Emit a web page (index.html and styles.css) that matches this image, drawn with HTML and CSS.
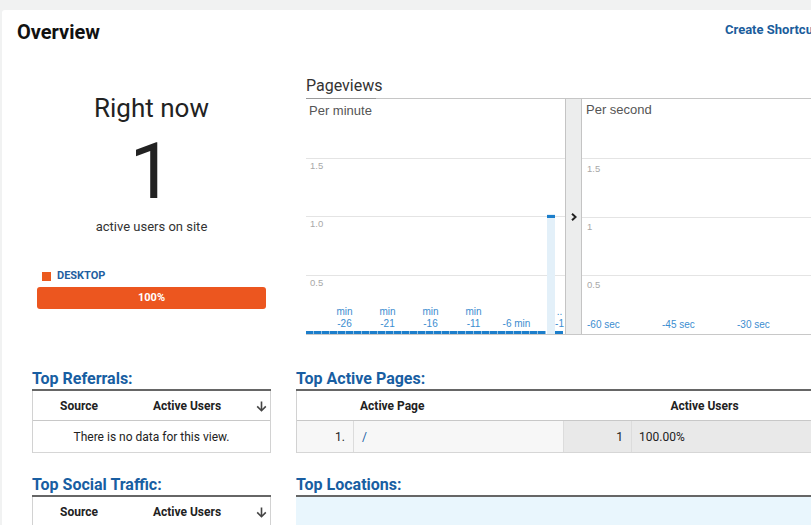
FILE: index.html
```html
<!DOCTYPE html>
<html lang="en">
<head>
<meta charset="utf-8">
<title>Overview</title>
<link rel="stylesheet" href="styles.css">
</head>
<body>
<div class="panel">
  <header class="topbar">
    <h1 class="title">Overview</h1>
    <a class="shortcut">Create Shortcut</a>
  </header>

  <div class="board">
    <section class="now">
      <div class="now-label">Right now</div>
      <div class="now-count">1</div>
      <div class="now-sub">active users on site</div>
      <div class="legend"><span class="swatch"></span><span class="legend-text">DESKTOP</span></div>
      <div class="device-bar">100%</div>
    </section>

    <section class="pageviews">
      <h2 class="pv-title">Pageviews</h2>
      <div class="chart">
        <div class="pane pane-min">
          <div class="pane-title">Per minute</div>
          <div class="gl gl-a"></div>
          <div class="gl gl-b"></div>
          <div class="gl gl-c"></div>
          <div class="yl ym-a">1.5</div>
          <div class="yl ym-b">1.0</div>
          <div class="yl ym-c">0.5</div>
          <div class="hl-col"></div>
          <div class="hl-cap"></div>
          <div class="axis"></div>
          <div class="last-bar"></div>
          <div class="xaxis-min">
            <div class="xl"><span>min</span><span>-26</span></div>
            <div class="xl"><span>min</span><span>-21</span></div>
            <div class="xl"><span>min</span><span>-16</span></div>
            <div class="xl"><span>min</span><span>-11</span></div>
            <div class="xl"><span>&nbsp;</span><span>-6 min</span></div>
            <div class="xl"><span>..</span><span>-1</span></div>
          </div>
        </div>
        <div class="divider">
          <svg class="chev" width="6" height="8" viewBox="0 0 6 8"><polyline points="1,0.8 4.6,4 1,7.2" fill="none" stroke="#222" stroke-width="2"/></svg>
        </div>
        <div class="pane pane-sec">
          <div class="pane-title">Per second</div>
          <div class="gl gs-a"></div>
          <div class="gl gs-b"></div>
          <div class="gl gs-c"></div>
          <div class="yl ys ys-a">1.5</div>
          <div class="yl ys ys-b">1</div>
          <div class="yl ys ys-c">0.5</div>
          <div class="xaxis-sec">
            <span class="xs">-60 sec</span>
            <span class="xs">-45 sec</span>
            <span class="xs">-30 sec</span>
          </div>
        </div>
      </div>
    </section>

    <section class="block row2">
      <h3 class="sec-title">Top Referrals:</h3>
      <div class="tbl">
        <div class="tr ref-cols thead">
          <div class="th">Source</div>
          <div class="th">Active Users</div>
          <div class="th th-sort"><svg width="11" height="11" viewBox="0 0 11 11"><path d="M5.5 0.5V9.6M1.2 5.4L5.5 9.7L9.8 5.4" fill="none" stroke="#444" stroke-width="1.6"/></svg></div>
        </div>
        <div class="empty-row">There is no data for this view.</div>
      </div>
    </section>

    <section class="block row2">
      <h3 class="sec-title">Top Active Pages:</h3>
      <div class="tbl">
        <div class="tr pg-cols thead">
          <div class="th"></div>
          <div class="th th-left">Active Page</div>
          <div class="th th-span">Active Users</div>
        </div>
        <div class="tr pg-cols drow">
          <div class="td c1">1.</div>
          <div class="td c2"><a class="page-link">/</a></div>
          <div class="td c3">1</div>
          <div class="td c4">100.00%</div>
        </div>
      </div>
    </section>

    <section class="block row3">
      <h3 class="sec-title">Top Social Traffic:</h3>
      <div class="tbl">
        <div class="tr ref-cols thead">
          <div class="th">Source</div>
          <div class="th">Active Users</div>
          <div class="th th-sort"><svg width="11" height="11" viewBox="0 0 11 11"><path d="M5.5 0.5V9.6M1.2 5.4L5.5 9.7L9.8 5.4" fill="none" stroke="#444" stroke-width="1.6"/></svg></div>
        </div>
        <div class="empty-row">There is no data for this view.</div>
      </div>
    </section>

    <section class="block row3">
      <h3 class="sec-title">Top Locations:</h3>
      <div class="map"></div>
    </section>
  </div>
</div>
</body>
</html>
```

FILE: styles.css
```css
* { box-sizing: border-box; }
html, body { margin: 0; padding: 0; }
body {
  background: #f1f2f2;
  font-family: Roboto, "Noto Sans", Arial, sans-serif;
  color: #222;
  width: 811px;
  height: 525px;
  overflow: hidden;
  padding: 10px 0 0 2px;
}
.panel {
  background: #fff;
  width: 880px;
  height: 515px;
  border-radius: 3px 3px 0 0;
  overflow: hidden;
}
.topbar {
  display: grid;
  grid-template-columns: 708px auto;
  align-items: start;
  padding: 10px 0 12px 15px;
}
.title {
  margin: 0;
  font-size: 20px;
  line-height: 24px;
  font-weight: 700;
  color: #111;
}
.shortcut {
  margin-top: 2px;
  font-size: 13px;
  line-height: 16px;
  font-weight: 700;
  color: #1b5d9c;
  white-space: nowrap;
}
.board {
  display: grid;
  grid-template-columns: 239px 550px;
  column-gap: 25px;
  padding-left: 30px;
  align-items: start;
}

/* Right now */
.now { text-align: center; }
.now-label {
  margin-top: 37px;
  font-size: 26px;
  line-height: 30px;
  color: #222;
}
.now-count {
  margin-top: 8px;
  font-size: 78px;
  line-height: 81px;
  color: #222;
}
.now-sub {
  margin-top: 7px;
  font-size: 13px;
  line-height: 16px;
  color: #333;
}
.legend {
  margin-top: 34px;
  height: 14px;
  display: flex;
  align-items: center;
  gap: 6px;
  padding-left: 10px;
}
.swatch { width: 9px; height: 9px; background: #eb5a1e; }
.legend-text {
  font-size: 11px;
  line-height: 14px;
  font-weight: 700;
  color: #1f5fa0;
}
.device-bar {
  margin: 4px 5px 0;
  height: 22px;
  line-height: 22px;
  background: #ec561f;
  border-radius: 3px;
  color: #fff;
  font-size: 11px;
  font-weight: 700;
}

/* Pageviews chart */
.pageviews { margin-left: 10px; padding-top: 19px; }
.pv-title {
  margin: 0;
  padding: 1px 0 2px;
  font-size: 16px;
  line-height: 20px;
  font-weight: 400;
  color: #333;
}
.chart {
  display: flex;
  height: 237px;
  border-bottom: 1px solid #c8c8c8;
}
.pane {
  position: relative;
  border-top: 1px solid #c6c6c6;
  font-family: "Liberation Sans", Arial, sans-serif;
}
.pane-min { width: 259px; }
.pane-sec { flex: 1; overflow: hidden; }
.pane-title {
  display: inline-block;
  margin-top: -1px;
  border-top: 1px solid #9a9a9a;
  padding: 4px 4px 0 3px;
  font-size: 13px;
  line-height: 15px;
  color: #555;
}
.pane-sec .pane-title { padding: 3px 4px 0 4px; margin-top: 0; border-top: 0; }
.divider {
  width: 17px;
  border-top: 1px solid #c6c6c6;
  border-left: 1px solid #c4c4c4;
  border-right: 1px solid #c4c4c4;
  background: #eceded;
  display: flex;
  justify-content: center;
  align-items: flex-start;
  padding-top: 114px;
}
.chev { display: block; }
.gl { position: absolute; left: 0; right: 0; height: 1px; background: #e4e4e4; }
.gl-a { top: 59px; }
.gl-b { top: 117px; }
.gl-c { top: 176px; }
.gs-a { top: 59px; }
.gs-b { top: 118px; }
.gs-c { top: 176px; }
.yl {
  position: absolute;
  left: 4px;
  font-size: 9.5px;
  line-height: 12px;
  color: #a8a8a8;
}
.ym-a { top: 61px; }
.ym-b { top: 119px; }
.ym-c { top: 178px; }
.ys { left: 5px; }
.ys-a { top: 64px; }
.ys-b { top: 122px; }
.ys-c { top: 180px; }
.axis {
  position: absolute;
  left: 0;
  bottom: 0;
  width: 240px;
  height: 3px;
  background: repeating-linear-gradient(to right, #1c7ecb 0 7px, #8ec1e8 7px 8px);
}
.hl-col {
  position: absolute;
  left: 241px;
  width: 8px;
  top: 115px;
  bottom: 0;
  background: #e3f0f9;
}
.hl-cap {
  position: absolute;
  left: 241px;
  width: 8px;
  top: 116px;
  height: 3px;
  background: #1c7ecb;
}
.last-bar {
  position: absolute;
  left: 249px;
  width: 8px;
  bottom: 0;
  height: 3px;
  background: #1c7ecb;
}
.xaxis-min {
  position: absolute;
  left: 17px;
  top: 207px;
  display: flex;
}
.xl {
  width: 43px;
  text-align: center;
  font-size: 10px;
  line-height: 12px;
  color: #3b8dd0;
}
.xl span { display: block; white-space: nowrap; }
.xaxis-sec {
  position: absolute;
  left: 5px;
  top: 220px;
  display: flex;
}
.xs {
  width: 75px;
  font-size: 10px;
  line-height: 12px;
  color: #3b8dd0;
  white-space: nowrap;
}

/* Tables */
.row2 { margin-top: 33px; }
.row3 { margin-top: 21px; }
.sec-title {
  margin: 0;
  padding-top: 1px;
  border-bottom: 2px solid #666;
  font-size: 16px;
  line-height: 20px;
  font-weight: 700;
  color: #185ea2;
}
.tbl {
  border-left: 1px solid #d2d2d2;
  border-right: 1px solid #d2d2d2;
  font-size: 12px;
}
.tr { display: grid; }
.ref-cols { grid-template-columns: 92px 124px 1fr; }
.pg-cols { grid-template-columns: 57px 210px 68px 1fr; }
.thead {
  height: 30px;
  padding-top: 1px;
  border-bottom: 1px solid #c8c8c8;
  align-items: center;
  font-weight: 700;
  color: #222;
}
.th { text-align: center; line-height: 14px; }
.th-left { text-align: left; padding-left: 6px; }
.th-span { grid-column: span 2; }
.th-sort {
  display: flex;
  justify-content: flex-end;
  padding-right: 3px;
}
.th-sort svg { display: block; }
.empty-row {
  height: 32px;
  border-bottom: 1px solid #d6d6d6;
  display: flex;
  align-items: center;
  justify-content: center;
  color: #222;
}
.drow {
  height: 32px;
  border-bottom: 1px solid #d6d6d6;
}
.td {
  display: flex;
  align-items: center;
  border-right: 1px solid #dcdcdc;
  color: #222;
}
.c1 { background: #f7f7f7; justify-content: flex-end; padding-right: 8px; }
.c2 { background: #f7f7f7; padding-left: 8px; }
.c3 { background: #e9e9e9; justify-content: flex-end; padding-right: 8px; }
.c4 { background: #e9e9e9; padding-left: 7px; border-right: 0; }
.page-link { color: #1a5fa5; }
.map {
  height: 220px;
  background: #e9f6fd;
}
```
